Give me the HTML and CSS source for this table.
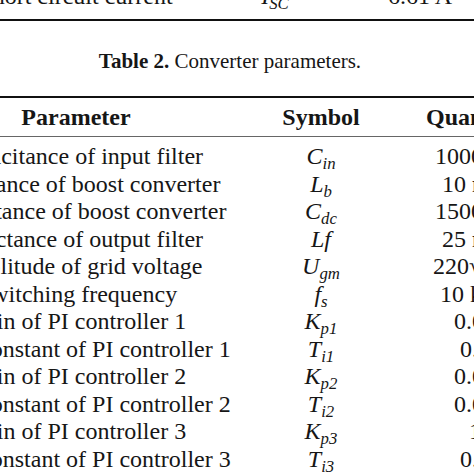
FILE: index.html
```html
<!DOCTYPE html>
<html>
<head>
<meta charset="utf-8">
<link rel="stylesheet" href="styles.css">
</head>
<body>
<div class="page">
  <div class="prev-row">
    <div class="cell">Short circuit current</div>
    <div class="cell"><i>I<sub>SC</sub></i></div>
    <div class="cell">6.61 A</div>
  </div>
  <div class="caption"><b>Table 2.</b> Converter parameters.</div>
  <table class="params">
    <colgroup>
      <col class="c1"><col class="c2"><col class="c3">
    </colgroup>
    <thead>
      <tr><th>Parameter</th><th>Symbol</th><th>Quantity</th></tr>
    </thead>
    <tbody>
      <tr class="first"><td>Capacitance of input filter</td><td><i>C<sub>in</sub></i></td><td>1000 μF</td></tr>
      <tr><td>Inductance of boost converter</td><td><i>L<sub>b</sub></i></td><td>10 mH</td></tr>
      <tr><td>Capacitance of boost converter</td><td><i>C<sub>dc</sub></i></td><td>1500 μF</td></tr>
      <tr><td>Inductance of output filter</td><td><i>Lf</i></td><td>25 mH</td></tr>
      <tr><td>Amplitude of grid voltage</td><td><i>U<sub>gm</sub></i></td><td>220√2 V</td></tr>
      <tr><td>Switching frequency</td><td><i>f<sub>s</sub></i></td><td>10 kHz</td></tr>
      <tr><td>Gain of PI controller 1</td><td><i>K<sub>p1</sub></i></td><td>0.05</td></tr>
      <tr><td>Time constant of PI controller 1</td><td><i>T<sub>i1</sub></i></td><td>0.1</td></tr>
      <tr><td>Gain of PI controller 2</td><td><i>K<sub>p2</sub></i></td><td>0.05</td></tr>
      <tr><td>Time constant of PI controller 2</td><td><i>T<sub>i2</sub></i></td><td>0.01</td></tr>
      <tr><td>Gain of PI controller 3</td><td><i>K<sub>p3</sub></i></td><td>1</td></tr>
      <tr><td>Time constant of PI controller 3</td><td><i>T<sub>i3</sub></i></td><td>0.1</td></tr>
    </tbody>
  </table>
</div>
</body>
</html>
```
FILE: styles.css
```css
html, body {
  margin: 0;
  padding: 0;
  background: #ffffff;
}
body {
  width: 474px;
  height: 474px;
  overflow: hidden;
  color: #161616;
  font-family: "Liberation Serif", "Times New Roman", serif;
}
.page {
  width: 634px;
  margin-left: -90px;
  margin-top: -17px;
}
.prev-row {
  display: grid;
  grid-template-columns: 266px 132px 158px;
  padding-left: 33px;
  font-size: 24px;
  line-height: 27.5px;
  padding-bottom: 8.5px;
  border-bottom: 2px solid #111;
}
.cell {
  text-align: center;
  white-space: nowrap;
}
sub {
  font-size: 0.7em;
  line-height: 0;
  vertical-align: -0.3em;
}
.caption {
  font-size: 21px;
  line-height: 24px;
  text-align: center;
  margin-top: 28px;
  margin-bottom: 22.5px;
  padding-left: 6px;
}
.params {
  border-collapse: collapse;
  table-layout: fixed;
  width: 634px;
  font-size: 24px;
  border-top: 2px solid #111;
}
.c1 { width: 332px; }
.c2 { width: 158px; }
.c3 { width: 144px; }
.params th,
.params td {
  padding: 0;
  text-align: center;
  white-space: nowrap;
  line-height: 27.5px;
  font-weight: normal;
}
.params th {
  font-weight: bold;
  padding-top: 6px;
  padding-bottom: 4.5px;
  border-bottom: 1.5px solid #666;
}
.params tr.first td {
  padding-top: 6.5px;
}
.params td:nth-child(1) {
  padding-left: 3px;
}
.params td:nth-child(3) {
  padding-left: 6px;
}
```
